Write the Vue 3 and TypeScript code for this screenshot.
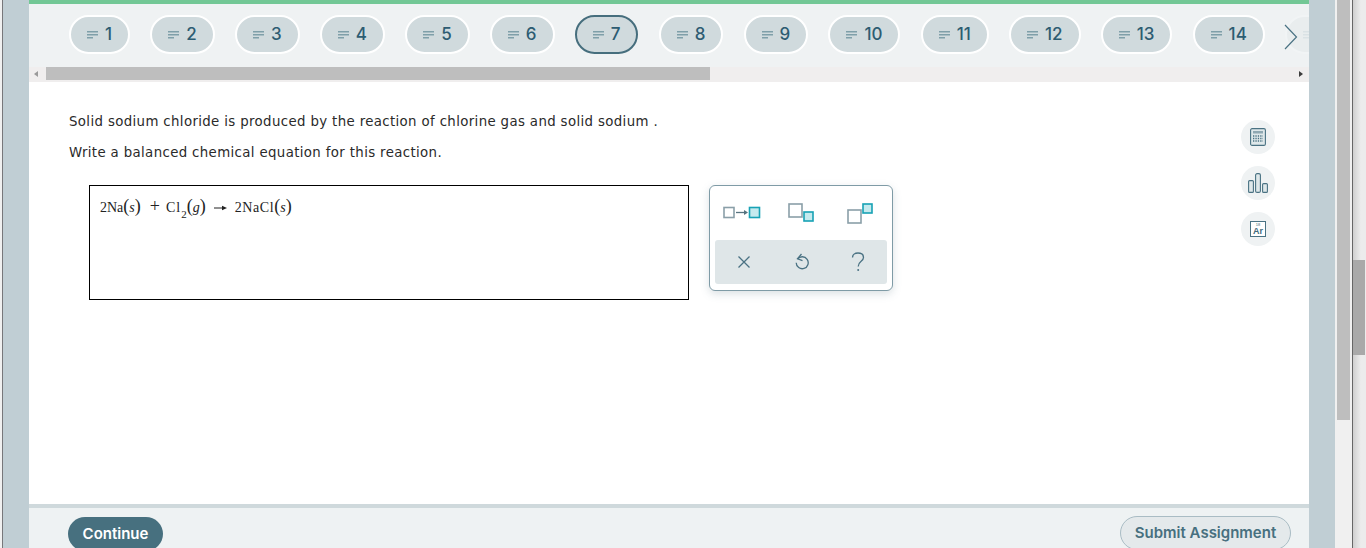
<script setup lang="ts">
const questions = [1, 2, 3, 4, 5, 6, 7, 8, 9, 10, 11, 12, 13, 14, 15]
const activeQuestion = 7
// the 15th pill is mostly scrolled out of the strip, only its icon shows
const lastVisible = 14
</script>

<template>
  <div class="page">
    <div class="edge" />
    <div class="gutter" />

    <main class="main">
      <div class="progress" />

      <nav class="pills">
        <div
          v-for="q in questions"
          :key="q"
          class="pill"
          :class="{ active: q === activeQuestion, faded: q > lastVisible }"
        >
          <svg class="pill-icon" width="11" height="8" viewBox="0 0 11 8" aria-hidden="true">
            <path d="M0 .8h11M0 3.800h11M0 6.800h6" stroke="#7f9fa9" stroke-width="1.500" fill="none" />
          </svg>
          <span v-if="q <= lastVisible">{{ q }}</span>
        </div>
        <svg class="chevron" width="14" height="26" viewBox="0 0 14 26" aria-hidden="true">
          <path d="M1 1l11.500 12L1 25" stroke="#4a7283" stroke-width="1.200" fill="none" />
        </svg>
      </nav>

      <div class="hscroll">
        <span class="arrow-left" />
        <div class="hthumb" />
        <span class="arrow-right" />
      </div>

      <section class="body">
        <div class="content">
          <p class="line">Solid sodium chloride is produced by the reaction of chlorine gas and solid sodium .</p>
          <p class="line second">Write a balanced chemical equation for this reaction.</p>

          <div class="editor-row">
            <div class="editor">
              <div class="eq">
                <span>2Na</span>
                <span class="par">(</span><i>s</i><span class="par">)</span>
                <span class="op">+</span>
                <span class="wide">Cl</span><sub>2</sub>
                <span class="par">(</span><i>g</i><span class="par">)</span>
                <svg class="eq-arrow" width="14" height="6" viewBox="0 0 14 6" aria-hidden="true">
                  <path d="M0 3h9" stroke="#222" stroke-width="1" />
                  <path d="M8 .8L13 3 8 5.200z" fill="#222" />
                </svg>
                <span class="wide-sm">2NaCl</span>
                <span class="par">(</span><i>s</i><span class="par">)</span>
              </div>
            </div>

            <div class="palette">
              <div class="palette-top">
                <svg width="38" height="14" viewBox="0 0 38 14" aria-hidden="true">
                  <rect x="1" y="1.500" width="10" height="10" fill="#fff" stroke="#8a9fa8" stroke-width="1.600" />
                  <path d="M13 6.500h9" stroke="#56737f" stroke-width="1.300" />
                  <path d="M21 4l4 2.500-4 2.500z" fill="#56737f" />
                  <rect x="26.500" y="1.500" width="10" height="10" fill="#c5eaee" stroke="#17a2b5" stroke-width="1.600" />
                </svg>
                <svg width="27" height="20" viewBox="0 0 27 20" aria-hidden="true">
                  <rect x="1" y="1" width="13" height="13" fill="#fff" stroke="#8a9fa8" stroke-width="1.600" />
                  <rect x="16" y="9" width="9" height="9" fill="#c5eaee" stroke="#17a2b5" stroke-width="1.600" />
                </svg>
                <svg width="27" height="21" viewBox="0 0 27 21" aria-hidden="true">
                  <rect x="1" y="7" width="13" height="13" fill="#fff" stroke="#8a9fa8" stroke-width="1.600" />
                  <rect x="16" y="1" width="9" height="9" fill="#c5eaee" stroke="#17a2b5" stroke-width="1.600" />
                </svg>
              </div>
              <div class="palette-actions">
                <svg width="14" height="14" viewBox="0 0 14 14" aria-hidden="true">
                  <path d="M1.500 1.500l11 11M12.500 1.500l-11 11" stroke="#4a7283" stroke-width="1.300" fill="none" />
                </svg>
                <svg width="16" height="18" viewBox="0 0 16 18" aria-hidden="true">
                  <path d="M4.500 6a6 6 0 1 1-1.300 3.800" stroke="#4a7283" stroke-width="1.300" fill="none" />
                  <path d="M8.500 1L4.500 5.800l5 1.800" stroke="#4a7283" stroke-width="1.300" fill="none" />
                </svg>
                <svg width="14" height="20" viewBox="0 0 14 20" aria-hidden="true">
                  <path d="M1.500 5.500C1.500 2.800 3.800 1 7 1s5.500 1.800 5.500 4.500c0 4-5.300 3.800-5.300 9" stroke="#4a7283" stroke-width="1.300" fill="none" />
                  <circle cx="7.200" cy="18" r="1" fill="#4a7283" />
                </svg>
              </div>
            </div>
          </div>
        </div>

        <aside class="tools">
          <div class="tool">
            <svg width="16" height="18" viewBox="0 0 16 18" aria-hidden="true">
              <rect x=".6" y=".6" width="14.800" height="16.800" rx="1.500" fill="#dfe8ea" stroke="#4a7283" stroke-width="1.100" />
              <rect x="3" y="3" width="10" height="2.500" fill="#8fa8b2" />
              <path d="M3 8h10M3 10.500h10M3 13h10" stroke="#4a7283" stroke-width="1.300" stroke-dasharray="1.300 1.100" />
            </svg>
          </div>
          <div class="tool">
            <svg width="20" height="20" viewBox="0 0 20 20" aria-hidden="true">
              <rect x=".6" y="7.600" width="4.800" height="11.800" rx="1" fill="#dfe8ea" stroke="#4a7283" stroke-width="1.100" />
              <rect x="7.600" y=".6" width="4.800" height="18.800" rx="1.500" fill="#dfe8ea" stroke="#4a7283" stroke-width="1.100" />
              <rect x="14.600" y="10.600" width="4.800" height="8.800" rx="1" fill="#dfe8ea" stroke="#4a7283" stroke-width="1.100" />
            </svg>
          </div>
          <div class="tool">
            <div class="element">
              <span class="element-num">18</span>
              <span class="element-sym">Ar</span>
            </div>
          </div>
        </aside>
      </section>

      <footer class="footer">
        <button class="btn-continue">Continue</button>
        <button class="btn-submit">Submit Assignment</button>
      </footer>
    </main>

    <div class="gutter" />

    <div class="vscroll">
      <div class="vthumb" />
    </div>

    <div class="outer">
      <div class="outer-thumb" />
    </div>
  </div>
</template>

<style scoped>
.page {
  display: flex;
  width: 1366px;
  height: 548px;
  overflow: hidden;
  background: #fff;
  font-family: "Inter", "Liberation Sans", sans-serif;
}

.edge {
  flex: none;
  width: 2px;
  background: #f0f0f0;
  border-right: 1px solid #77777a;
}

.gutter {
  flex: none;
  width: 26px;
  background: #c0ced4;
}

.main {
  flex: none;
  width: 1280px;
  display: flex;
  flex-direction: column;
}

.progress {
  flex: none;
  height: 4px;
  background: #72c795;
}

.pills {
  flex: none;
  position: relative;
  height: 63px;
  padding: 11px 0 0 40px;
  box-sizing: border-box;
  display: flex;
  gap: 20.200px;
  background: #eff2f3;
  overflow: hidden;
}

.pill {
  flex: none;
  display: flex;
  align-items: center;
  justify-content: center;
  gap: 7px;
  box-sizing: border-box;
  height: 39px;
  padding: 0 16px 1px;
  border: 2px solid #fff;
  border-radius: 20px;
  background: #d0dadd;
  color: #2d5c72;
  font-size: 17px;
  font-weight: 500;
}

.pill.active {
  border-color: #466e7d;
}

.pill.faded {
  opacity: 0.18;
}

.pill-icon {
  flex: none;
  margin-top: 1px;
}

.chevron {
  position: absolute;
  left: 1255px;
  top: 20px;
}

.hscroll {
  flex: none;
  position: relative;
  height: 15px;
  background: #f0eeee;
}

.hthumb {
  position: absolute;
  left: 17px;
  width: 664px;
  height: 13px;
  background: #bebebe;
}

.arrow-left,
.arrow-right {
  position: absolute;
  top: 4px;
  width: 0;
  height: 0;
  border-top: 3.500px solid transparent;
  border-bottom: 3.500px solid transparent;
}

.arrow-left {
  left: 5px;
  border-right: 4px solid #9a9a9a;
}

.arrow-right {
  right: 6px;
  border-left: 4px solid #3c3c3c;
}

.body {
  flex: 1;
  display: flex;
  justify-content: space-between;
  min-height: 0;
}

.content {
  padding: 32px 0 0 40px;
}

.line {
  margin: 0;
  font-family: "DejaVu Sans", Verdana, sans-serif;
  font-size: 13.330px;
  letter-spacing: 0.360px;
  line-height: 16px;
  color: #2a2a2a;
}

.line.second {
  margin-top: 15px;
}

.editor-row {
  display: flex;
  align-items: flex-start;
  gap: 20px;
  margin: 24px 0 0 20px;
}

.editor {
  box-sizing: border-box;
  width: 600px;
  height: 115px;
  padding: 12px 10px;
  border: 1px solid #000;
  background: #fff;
}

.eq {
  display: flex;
  align-items: baseline;
  font-family: "Liberation Serif", serif;
  font-size: 14px;
  line-height: 18px;
  color: #222;
  white-space: nowrap;
}

.wide {
  letter-spacing: 1px;
}

.wide-sm {
  letter-spacing: 0.600px;
}

.par {
  font-size: 18px;
  font-weight: 300;
  line-height: 17px;
}

.op {
  margin: 0 6px 0 9px;
  font-size: 18px;
  line-height: 17px;
}

.eq sub {
  font-size: 11px;
  line-height: 0;
  position: relative;
  top: 6px;
}

.eq-arrow {
  margin: 0 7px 0 8px;
  align-self: center;
}

.palette {
  box-sizing: border-box;
  width: 184px;
  height: 106px;
  padding: 0 5px;
  border: 1px solid #7f9ba6;
  border-radius: 6px;
  background: #fff;
  box-shadow: 0 3px 8px rgba(90, 120, 130, 0.22);
}

.palette-top {
  height: 54px;
  display: grid;
  grid-template-columns: 59px 59px 59px;
  justify-content: center;
  justify-items: center;
  align-items: center;
}

.palette-actions {
  height: 44px;
  display: grid;
  grid-template-columns: 57px 57px 57px;
  justify-content: center;
  justify-items: center;
  align-items: center;
  border-radius: 3px;
  background: #dfe6e8;
}

.tools {
  display: flex;
  flex-direction: column;
  gap: 12px;
  padding: 38px 34px 0 0;
}

.tool {
  width: 34px;
  height: 34px;
  display: flex;
  align-items: center;
  justify-content: center;
  border-radius: 50%;
  background: #eff2f3;
}

.element {
  box-sizing: border-box;
  width: 16px;
  height: 16px;
  display: flex;
  flex-direction: column;
  align-items: center;
  border: 1px solid #4a7283;
  color: #3f6a7c;
  background: #fff;
  font-family: "Liberation Sans", sans-serif;
}

.element-num {
  font-size: 4px;
  line-height: 5px;
}

.element-sym {
  font-size: 9px;
  line-height: 8px;
  font-weight: 700;
}

.footer {
  flex: none;
  box-sizing: border-box;
  height: 44px;
  display: flex;
  justify-content: space-between;
  align-items: flex-start;
  padding: 9px 18px 0 39px;
  border-top: 4px solid #cfd9dc;
  background: #eef2f3;
  overflow: hidden;
}

.btn-continue,
.btn-submit {
  flex: none;
  height: 34px;
  padding: 0 0 2px;
  border-radius: 17px;
  font-family: "Inter", "Liberation Sans", sans-serif;
  font-size: 15px;
  font-weight: 600;
}

.btn-continue {
  width: 95px;
  border: none;
  background: #47707f;
  color: #fff;
}

.btn-submit {
  width: 171px;
  margin-top: -1px;
  border: 1px solid #a9bcc4;
  background: #e4e9eb;
  color: #47707f;
}

.vscroll {
  flex: none;
  box-sizing: border-box;
  width: 17px;
  padding: 0 2px;
  background: #f0f0f0;
}

.vthumb {
  width: 13px;
  height: 420px;
  background: #bebebe;
}

.outer {
  flex: 1;
  position: relative;
  border-left: 1px solid #666;
  background: linear-gradient(to right, #cfcfcf, #ececec 60%);
}

.outer-thumb {
  position: absolute;
  top: 260px;
  left: 0;
  width: 12px;
  height: 95px;
  background: #a9a9a9;
}
</style>

<style>
html,
body {
  margin: 0;
  overflow: hidden;
}
</style>
